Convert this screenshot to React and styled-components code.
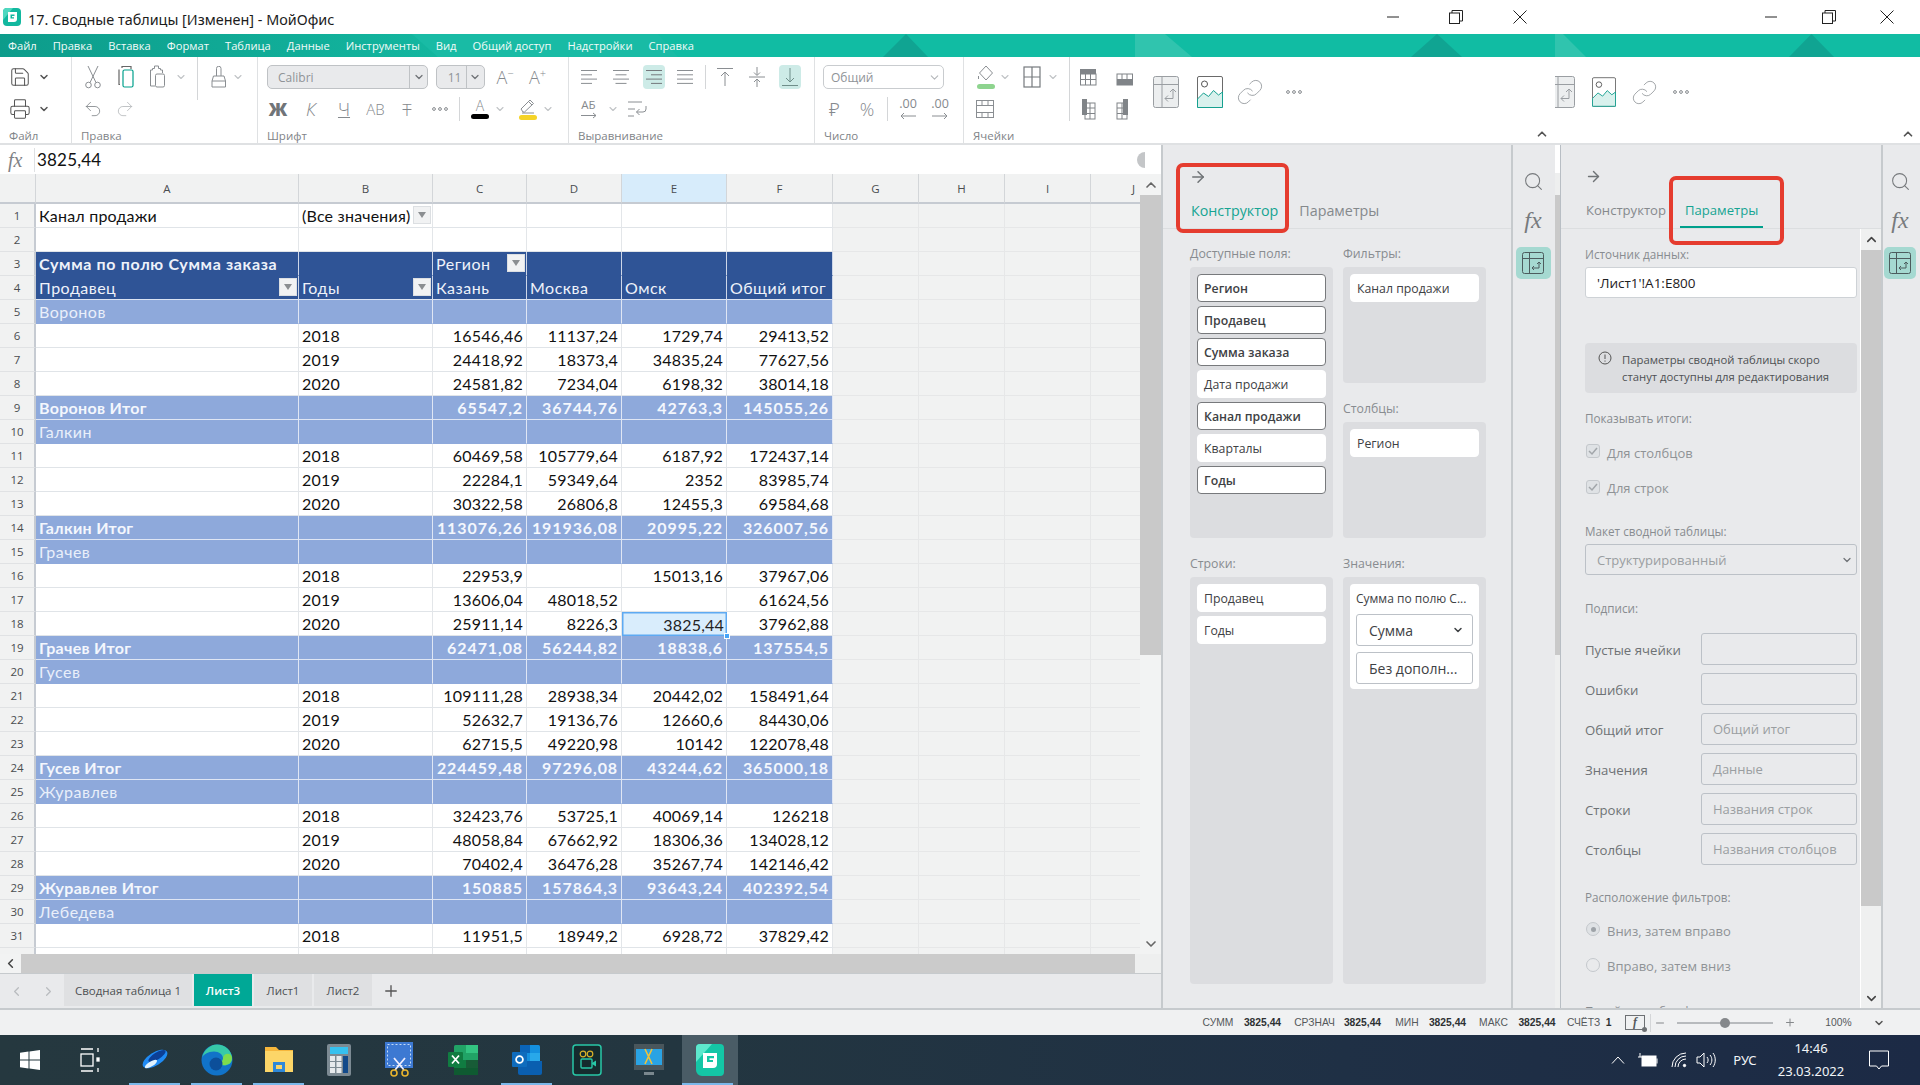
import React from "react";
import styled, { createGlobalStyle } from "styled-components";
import { Save, Printer, ChevronDown, ChevronUp, ChevronLeft, ChevronRight, Undo2, Redo2, ArrowRight, Search, Link, Plus, Minus } from "lucide-react";

const UI = `"Open Sans", "Noto Sans", sans-serif`;
const CELL = `Lato, "Open Sans", sans-serif`;

const GlobalStyle = createGlobalStyle`
  html, body { margin: 0; padding: 0; background: #fff; }
  body { font-family: ${UI}; }
  * { box-sizing: border-box; }
`;

const Page = styled.div`
  width: 1920px;
  height: 1085px;
  display: flex;
  flex-direction: column;
  overflow: hidden;
`;

/* ---------- flow helper: each tool is placed after the previous one ---------- */
const ToolRow = styled.div`
  display: flex;
  align-items: center;
  height: ${(p) => p.$h || 32}px;
`;
const Slot = styled.div`
  flex: none;
  width: ${(p) => p.$w}px;
  margin-left: ${(p) => p.$ml}px;
  display: flex;
  align-items: center;
  justify-content: center;
  white-space: nowrap;
`;
const Tools = ({ from = 0, items, h }) => {
  let x = from;
  return (
    <ToolRow $h={h}>
      {items.map(([c, w, node], i) => {
        const ml = c - w / 2 - x;
        x = c + w / 2;
        return (
          <Slot key={i} $w={w} $ml={ml}>
            {node}
          </Slot>
        );
      })}
    </ToolRow>
  );
};

/* ---------- title + menu ---------- */
const TitleBar = styled.div`
  height: 34px;
  display: flex;
  align-items: center;
  background: #fff;
`;
const TitleLeft = styled.div`
  flex: 1;
  display: flex;
  align-items: center;
  padding-left: 3px;
  gap: 7px;
`;
const TitleText = styled.div`
  font-family: "Noto Sans", sans-serif;
  font-size: 14.4px;
  color: #1c1c1c;
  padding-top: 4px;
`;
const MenuBar = styled.div`
  position: relative;
  height: 23px;
  background: #11bca3;
  display: flex;
  align-items: center;
  padding-left: 8px;
  gap: 16px;
`;
const MenuArt = styled.svg`
  position: absolute;
  left: 0;
  top: 0;
`;
const MenuItem = styled.span`
  position: relative;
  font-size: 11.2px;
  color: #f1fbf9;
  white-space: nowrap;
`;

/* ---------- ribbon ---------- */
const Ribbon = styled.div`
  height: 88px;
  display: flex;
  background: #fff;
  border-bottom: 2px solid #dfe1e3;
`;
const GroupBox = styled.div`
  flex: none;
  width: ${(p) => p.$w}px;
  padding-top: 4px;
  border-right: ${(p) => (p.$plain ? "none" : "1px solid #dfe1e3")};
  display: flex;
  flex-direction: column;
`;
const GroupLabel = styled.div`
  height: 14px;
  margin-top: 4px;
  line-height: 14px;
  padding-left: 9px;
  font-size: 11.5px;
  color: #7f8488;
`;
const WinBlock = styled.div`
  flex: none;
  width: ${(p) => p.$w}px;
  display: flex;
  flex-direction: column;
`;
const CollapseRow = styled.div`
  flex: 1;
  display: flex;
  justify-content: flex-end;
  padding-right: ${(p) => p.$pr}px;
  color: #555;
`;
const VRule = styled.div`
  width: 1px;
  height: ${(p) => p.$h || 24}px;
  background: #d4d6d8;
`;
const ComboBox = styled.div`
  width: 100%;
  height: 24px;
  display: flex;
  align-items: center;
  border: 1px solid ${(p) => (p.$white ? "#c9cccf" : "#bfc2c5")};
  border-radius: 5px;
  background: ${(p) => (p.$white ? "#fff" : "#e9eaec")};
  color: #8f9397;
  font-size: 12px;
  overflow: hidden;
`;
const ComboText = styled.span`
  flex: 1;
  padding-left: ${(p) => p.$pl ?? 10}px;
`;
const ComboArrow = styled.span`
  flex: none;
  width: 18px;
  height: 100%;
  display: flex;
  align-items: center;
  justify-content: center;
  border-left: ${(p) => (p.$line ? "1px solid #bfc2c5" : "none")};
  color: #6f7377;
`;
const Glyph = styled.span`
  font-family: ${UI};
  font-size: ${(p) => p.$s || 16}px;
  font-weight: ${(p) => p.$fw || 300};
  font-style: ${(p) => (p.$it ? "italic" : "normal")};
  color: ${(p) => p.$c || "#85898d"};
  line-height: 1;
  text-decoration: ${(p) => p.$deco || "none"};
`;
const Sup = styled.sup`
  font-size: 11px;
  line-height: 0;
`;
const ColorTool = styled.div`
  display: flex;
  flex-direction: column;
  align-items: center;
  gap: 1px;
`;
const ColorBar = styled.div`
  width: 18px;
  height: 5px;
  border-radius: 3px;
  background: ${(p) => p.$c};
`;
const Toggled = styled.div`
  width: 22px;
  height: 24px;
  border-radius: 4px;
  background: #cdebe7;
  display: flex;
  align-items: center;
  justify-content: center;
`;

const Ico = ({ w = 20, h = 20, c = "#8a8e92", sw = 1, children }) => (
  <svg width={w} height={h} viewBox={`0 0 ${w} ${h}`} fill="none" stroke={c} strokeWidth={sw}>
    {children}
  </svg>
);
const Chev = ({ light }) => <ChevronDown size={12} strokeWidth={light ? 2.2 : 3} color={light ? "#c0c3c6" : "#555"} />;

const AlignIco = ({ kind }) => {
  const rows = kind === "justify" ? [16, 16, 16, 16] : [16, 11, 16, 11];
  return (
    <Ico w={16} h={16} c={kind === "right" ? "#74787c" : "#8a8e92"}>
      {rows.map((l, i) => {
        const x = kind === "center" ? (16 - l) / 2 : kind === "right" ? 16 - l : 0;
        return <path key={i} d={`M${x} ${1.5 + i * 4.3}h${l}`} />;
      })}
    </Ico>
  );
};
const ScissorsIco = () => (
  <Ico w={16} h={24}>
    <circle cx="3.5" cy="20" r="2.8" />
    <circle cx="12.5" cy="20" r="2.8" />
    <path d="M5 17.6 13 1M11 17.6 3 1" />
  </Ico>
);
const CopyIco = () => (
  <Ico w={18} h={24} c="#00a08c" sw={1.2}>
    <path d="M4 3V1.5h9V4" stroke="#666" />
    <path d="M1 4.5v15h1" stroke="#666" />
    <rect x="5" y="5" width="10" height="17" rx="1.5" />
  </Ico>
);
const PasteIco = () => (
  <Ico w={18} h={24}>
    <path d="M1.5 5h2v-1.5h2V1h4v2.5h2V5h2v3M6 21H1.5V5" />
    <rect x="6.5" y="9" width="9" height="13" rx="1.5" />
  </Ico>
);
const BrushIco = () => (
  <Ico w={16} h={22}>
    <path d="M5.5 10V2.5a2 2 0 0 1 4.5 0V10M2.5 10h10.5l1.5 5H1l1.500-5zM1 15v6h13.500v-6" />
  </Ico>
);
const VAlignIco = ({ kind, c }) => (
  <Ico w={18} h={20} c={c}>
    {kind === "top" && <path d="M1 1.500h16M9 19V5M5 9l4-4 4 4" />}
    {kind === "mid" && <path d="M1 10h16M9 0v8M6 5.500l3 3 3-3M9 20v-8M6 15l3-3 3 3" />}
    {kind === "bottom" && <path d="M1 18.500h16M9 1v14M5 11l4 4 4-4" />}
  </Ico>
);
const LetterArrow = () => (
  <ColorTool>
    <Glyph $s={11.5} $fw={400}>АБ</Glyph>
    <Ico w={16} h={7}><path d="M0 3.500h15M12 1l3 2.500-3 2.500" /></Ico>
  </ColorTool>
);
const WrapIco = () => (
  <Ico w={20} h={20}>
    <path d="M1 2h14M1 9h7M1 16h6M19 6v3a3 3 0 0 1-3 3H9.500M12.500 9l-3 3 3 3" transform="translate(0 1)" />
  </Ico>
);
const DecIco = ({ dir }) => (
  <ColorTool>
    <Glyph $s={12.500} $fw={400}>.00</Glyph>
    <Ico w={16} h={8}>
      {dir === "left" ? <path d="M16 4H1M4 1 1 4l3 3" /> : <path d="M0 4h15M12 1l3 3-3 3" />}
    </Ico>
  </ColorTool>
);
const FillIco = () => (
  <ColorTool>
    <Ico w={20} h={18}>
      <path d="M10 1l6.500 7-6.500 7-6.500-7zM2.500 11v3" />
    </Ico>
    <ColorBar $c="#8ed48f" />
  </ColorTool>
);
const PencilIco = () => (
  <ColorTool>
    <Ico w={18} h={15}>
      <path d="M4 13 2 10l9-9 3.500 3.500-9 8.500zM3 14h12M9.500 2.500l3.500 3.500" />
    </Ico>
    <ColorBar $c="#f5d327" />
  </ColorTool>
);
const BorderIco = () => (
  <Ico w={18} h={22} c="#767a7e" sw={1.2}>
    <rect x="1" y="1" width="16" height="20" />
    <path d="M9 1v20M1 11h16" />
  </Ico>
);
// fill: rectangle in dark on one side of a small table
const TableIco = ({ side }) => {
  const dark = "#808488";
  if (side === "top" || side === "bottom") {
    return (
      <Ico w={20} h={18} c="#808488">
        <rect x={side === "top" ? 0.500 : 4} y="6" width="15.500" height="11" />
        <path d={`M${side === "top" ? 0.5 : 4} 11.500h15.500M${side === "top" ? 5.500 : 9} 6v11M${side === "top" ? 10.500 : 14} 6v11`} />
        <rect x={side === "top" ? 0 : 4} y={side === "top" ? 1 : 12} width="16" height="5" fill={dark} stroke="none" />
      </Ico>
    );
  }
  return (
    <Ico w={18} h={22} c="#808488">
      <rect x="4" y="5" width="10" height="16" />
      <path d="M9 5v16M4 10h10M4 15.500h10" />
      <rect x={side === "left" ? 1 : 10} y="1" width="5" height="16" fill={dark} stroke="none" />
    </Ico>
  );
};
const RowsIco = () => (
  <Ico w={18} h={18}>
    <rect x="0.500" y="0.500" width="17" height="17" />
    <path d="M.500 5.500h17M.500 12.500h17M6 .500v5M12 .500v5M6 12.500v5M12 12.500v5" />
  </Ico>
);
const PivotBig = ({ cut }) => (
  <svg width={cut ? 20 : 26} height="32" viewBox={cut ? "6 0 20 32" : "0 0 26 32"} fill="#eceeef" stroke="#9a9ea2">
    <rect x=".5" y=".5" width="25" height="31" rx="2" />
    <path d="M.5 8.500h25M9 .500v31M12 22.500h8V13M17 16l3-3 3 3M15 19.500l-3 3 3 3" fill="none" />
  </svg>
);
const ImageBig = ({ small }) => (
  <svg width={small ? 24 : 26} height="32" viewBox="0 0 26 32" fill="none" stroke="#15a08f">
    <path d="M2 .500h22a1.500 1.500 0 0 1 1.500 1.500v28a1.500 1.500 0 0 1-1.500 1.500H2A1.500 1.500 0 0 1 .500 30V2A1.500 1.500 0 0 1 2 .500z" stroke="#444" strokeWidth=".8" />
    <path d="M.5 31.500h25V16l-4 3-5-4.500-5 6-5-3.500-6 6z" fill="#d9f1ed" stroke="#15a08f" />
    <circle cx="7.500" cy="8" r="3" stroke="#555" />
  </svg>
);
const Dots = () => (
  <svg width="16" height="4" viewBox="0 0 16 4" fill="none" stroke="#85898d">
    <circle cx="2" cy="2" r="1.400" />
    <circle cx="8" cy="2" r="1.400" />
    <circle cx="14" cy="2" r="1.400" />
  </svg>
);

const RibbonGroup = ({ w, label, rows, plain, from }) => (
  <GroupBox $w={w} $plain={plain}>
    {rows.map((items, i) => (
      <Tools key={i} from={from} items={items} />
    ))}
    <GroupLabel>{label}</GroupLabel>
  </GroupBox>
);

/* ---------- sheet ---------- */
const Work = styled.div`
  height: 863px;
  display: flex;
  background: #e9eaec;
`;
const SheetArea = styled.div`
  flex: none;
  width: 1163px;
  display: flex;
  flex-direction: column;
  border-right: 2px solid #c6cacd;
`;
const FormulaBar = styled.div`
  flex: none;
  height: 29px;
  background: #fff;
  display: flex;
  align-items: center;
`;
const FxMark = styled.div`
  width: 35px;
  padding-left: 8px;
  font-family: "Liberation Serif", serif;
  font-style: italic;
  font-size: 20px;
  color: #7f8387;
  border-right: 1px solid #dfe1e3;
  line-height: 24px;
`;
const FormulaValue = styled.div`
  flex: 1;
  padding-left: 2px;
  font-family: ${CELL};
  font-size: 17px;
  letter-spacing: 0.2px;
  color: #111;
`;
const PanelHandle = styled.div`
  width: 8px;
  height: 16px;
  margin-right: 16px;
  border-radius: 8px 0 0 8px;
  background: #c4c6c8;
`;
const GridRow = styled.div`
  flex: none;
  height: 780px;
  display: flex;
`;
const SheetGrid = styled.div`
  flex: none;
  width: 1140px;
  height: 780px;
  overflow: hidden;
  display: grid;
  grid-template-columns: 36px 263px 134px 94px 95px 105px 106px 86px 86px 86px 86px;
  grid-auto-rows: 24px;
  grid-template-rows: 30px;
  font-family: ${CELL};
  font-size: 16px;
`;
const ColHead = styled.div`
  display: flex;
  align-items: center;
  justify-content: center;
  font-family: ${UI};
  font-size: 11.500px;
  color: #4a4d50;
  background: ${(p) => (p.$active ? "#d7ecfb" : "#f1f2f2")};
  border-right: 1px solid #d3d6d9;
  border-bottom: 2px solid #c6cbd2;
`;
const RowHead = styled.div`
  display: flex;
  align-items: center;
  justify-content: center;
  font-family: ${UI};
  font-size: 11.500px;
  color: #4a4d50;
  background: #f1f2f2;
  border-right: 2px solid #c6cbd2;
  border-bottom: 1px solid #e0e2e4;
`;
const cellSkin = {
  plain: "background:#fff;color:#111;letter-spacing:.2px;border-right:1px solid #e3e6e9;border-bottom:1px solid #e0e4e8;",
  empty: "background:#f1f2f2;border-right:1px solid #e6e7e8;border-bottom:1px solid #e6e7e8;",
  head: "background:#2f5496;color:#eef2fa;letter-spacing:.5px;border-right:1px solid #cdd6e8;border-bottom:1px solid #2f5496;",
  headEnd: "background:#2f5496;color:#eef2fa;letter-spacing:.5px;border-right:1px solid #cdd6e8;border-bottom:1px solid #dbe3f2;",
  band: "background:#8ea9db;color:#e9effa;letter-spacing:.5px;border-right:1px solid #dfe6f4;border-bottom:1px solid #8ea9db;",
  total: "background:#8ea9db;color:#f4f7fd;font-weight:700;letter-spacing:.3px;border-right:1px solid #dfe6f4;border-bottom:1px solid #dfe6f4;",
  selected: "background:#d9edfc;color:#222;letter-spacing:.2px;box-shadow:inset 0 0 0 1.500px #5eaaf2;",
};
const Cell = styled.div`
  position: relative;
  display: flex;
  align-items: center;
  justify-content: ${(p) => (p.$num ? "flex-end" : "flex-start")};
  padding: 0 3px;
  white-space: nowrap;
  ${(p) => cellSkin[p.$skin]}
  ${(p) => (p.$bold ? "font-weight:700;letter-spacing:.65px;" : "")}
  ${(p) => (p.$skin === "total" && p.$num ? "letter-spacing:.9px;" : "")}
`;
const FilterBtn = styled.div`
  position: absolute;
  right: 1px;
  top: 2px;
  width: 18px;
  height: 18px;
  display: flex;
  align-items: center;
  justify-content: center;
  background: #f1f2f3;
  border: 1px solid #dcdfe2;
  &::after {
    content: "";
    border-left: 4px solid transparent;
    border-right: 4px solid transparent;
    border-top: 6px solid #8b8e91;
  }
`;
const SelHandle = styled.div`
  position: absolute;
  right: -3px;
  bottom: -3px;
  width: 6px;
  height: 6px;
  background: #49a5f7;
  border: 1px solid #fff;
  z-index: 2;
`;
const VScroll = styled.div`
  flex: none;
  width: 21px;
  display: flex;
  flex-direction: column;
  background: #f2f3f3;
`;
const ScrollBtn = styled.div`
  flex: none;
  height: ${(p) => p.$h}px;
  display: flex;
  align-items: center;
  justify-content: center;
  color: #666;
`;
const ScrollThumb = styled.div`
  flex: none;
  height: ${(p) => p.$h}px;
  background: #c9c9c9;
`;
const ScrollRest = styled.div`
  flex: 1;
`;
const HScroll = styled.div`
  flex: none;
  height: 20px;
  display: flex;
  background: #eeefef;
  border-bottom: 1px solid #c6cacd;
`;
const HBtn = styled.div`
  flex: none;
  width: 21px;
  display: flex;
  align-items: center;
  justify-content: center;
  color: #444;
  background: #f2f3f3;
`;
const HThumb = styled.div`
  flex: none;
  width: 1114px;
  background: #cbcbcb;
`;
const SheetTabs = styled.div`
  flex: 1;
  display: flex;
  align-items: stretch;
  background: #e9eaec;
`;
const SheetNav = styled.div`
  width: 32px;
  display: flex;
  align-items: center;
  justify-content: center;
  color: #b9bcbf;
`;
const SheetTab = styled.div`
  flex: none;
  width: ${(p) => p.$w}px;
  margin-right: 2px;
  height: 32px;
  display: flex;
  align-items: center;
  justify-content: center;
  font-size: 11.500px;
  background: ${(p) => (p.$active ? "#00a896" : "#dfe0e2")};
  color: ${(p) => (p.$active ? "#fff" : "#4d5053")};
  font-weight: ${(p) => (p.$active ? 600 : 400)};
`;
const AddSheet = styled.div`
  margin-left: 8px;
  display: flex;
  align-items: center;
  color: #555;
`;

/* ---------- side panels ---------- */
const Panel = styled.div`
  position: relative;
  flex: none;
  width: ${(p) => p.$w}px;
  height: 100%;
  display: flex;
  flex-direction: column;
  overflow: hidden;
  border-left: ${(p) => (p.$edge ? "1px solid #b8bec4" : "none")};
`;
const PanelHead = styled.div`
  flex: none;
  height: 84px;
  display: flex;
  flex-direction: column;
  padding-left: ${(p) => p.$pl}px;
  border-bottom: 1px solid #dcdee0;
  color: #6f7376;
`;
const BackArrow = styled.div`
  height: 52px;
  padding: 23px 0 0 ${(p) => p.$pl}px;
`;
const TabRow = styled.div`
  flex: 1;
  display: flex;
  gap: ${(p) => p.$gap}px;
`;
const TabBtn = styled.div`
  padding: 5px 5px 0;
  height: 32px;
  font-size: ${(p) => p.$s}px;
  color: ${(p) => (p.$active ? "#15a492" : "#85898c")};
  border-bottom: ${(p) => (p.$line ? "2.500px solid #00a08c" : "none")};
`;
const RedFrame = styled.div`
  position: absolute;
  left: ${(p) => p.$l}px;
  top: ${(p) => p.$t}px;
  width: ${(p) => p.$w}px;
  height: ${(p) => p.$h}px;
  border: 4px solid #e53c2f;
  border-radius: 7px;
`;
const PivotBody = styled.div`
  flex: 1;
  display: grid;
  grid-template-columns: 143px 143px;
  column-gap: 10px;
  padding: 16px 0 0 27px;
`;
const PivotCol = styled.div`
  display: flex;
  flex-direction: column;
`;
const FieldLabel = styled.div`
  height: 18px;
  line-height: 18px;
  margin-top: ${(p) => p.$mt || 0}px;
  font-size: ${(p) => p.$s || 11.7}px;
  color: #888c90;
  white-space: nowrap;
`;
const FieldBox = styled.div`
  margin-top: 4px;
  height: ${(p) => p.$h}px;
  padding: 7px;
  display: flex;
  flex-direction: column;
  gap: 4px;
  background: #dcdde0;
  border-radius: 4px;
`;
const FieldItem = styled.div`
  flex: none;
  height: 28px;
  display: flex;
  align-items: center;
  padding-left: 6px;
  background: #fff;
  border-radius: 4px;
  font-size: 12.300px;
  color: #3e4144;
  white-space: nowrap;
  font-weight: ${(p) => (p.$used ? 600 : 400)};
  border: 1px solid ${(p) => (p.$used ? "#77797c" : "#fff")};
`;
const ValueCard = styled.div`
  flex: none;
  height: 105px;
  padding: 3px 6px 0;
  background: #fff;
  border-radius: 4px;
  font-size: 12px;
  color: #3e4144;
  white-space: nowrap;
`;
const ValueTitle = styled.div`
  height: 27px;
  line-height: 24px;
`;
const ValueBtn = styled.div`
  height: 32px;
  margin-bottom: 6px;
  display: flex;
  align-items: center;
  justify-content: space-between;
  padding: 0 8px 0 12px;
  border: 1px solid #bcc1c7;
  border-radius: 3px;
  font-size: 14px;
  color: #3e4144;
`;
const Strip = styled.div`
  flex: none;
  width: ${(p) => p.$w}px;
  height: 100%;
  padding: 26px ${(p) => p.$pr}px 0 0;
  display: flex;
  flex-direction: column;
  align-items: center;
  border-left: 2px solid #c6cacd;
  color: #76797c;
`;
const StripFx = styled.div`
  margin-top: 13px;
  height: 30px;
  font-family: "Liberation Serif", serif;
  font-style: italic;
  font-size: 24px;
  line-height: 30px;
  color: #777a7d;
`;
const StripActive = styled.div`
  margin-top: 12px;
  flex: none;
  width: ${(p) => p.$w}px;
  height: 32px;
  display: flex;
  align-items: center;
  justify-content: center;
  border-radius: 5px;
  background: #a5d9d1;
`;
const Sliver = styled.div`
  flex: none;
  width: 5px;
  display: flex;
  flex-direction: column;
  background: #eeefef;
`;
const SliverPart = styled.div`
  flex: none;
  height: ${(p) => p.$h}px;
  background: ${(p) => p.$c};
`;
const PanelMain = styled.div`
  flex: 1;
  display: flex;
  min-height: 0;
`;
const ParamsBody = styled.div`
  flex: none;
  width: 300px;
  padding: 16px 3px 0 24px;
  overflow: hidden;
  border-right: 1px solid #fff;
  color: #7e8285;
`;
const TextInput = styled.div`
  height: ${(p) => p.$h || 31}px;
  margin-top: ${(p) => p.$mt || 0}px;
  padding-left: 11px;
  display: flex;
  align-items: center;
  border: 1px solid ${(p) => (p.$white ? "#ced2d6" : "#bcc1c7")};
  border-radius: 3px;
  background: ${(p) => (p.$white ? "#fff" : "transparent")};
  color: ${(p) => p.$c || "#9a9ea1"};
  font-size: ${(p) => p.$s || 13}px;
  white-space: nowrap;
`;
const InfoBox = styled.div`
  margin-top: 45px;
  height: 50px;
  display: flex;
  gap: 10px;
  padding: 8px 0 0 13px;
  background: #dcdde0;
  border-radius: 4px;
  color: #4e5154;
  font-size: 11.300px;
  line-height: 17px;
`;
const CheckRow = styled.div`
  height: 35.500px;
  margin-top: ${(p) => p.$mt || 0}px;
  display: flex;
  align-items: center;
  gap: 7px;
  padding-left: 1px;
  font-size: 13px;
  color: #8f9396;
`;
const CheckBox = styled.div`
  flex: none;
  width: 14px;
  height: 14px;
  margin-top: -3px;
  display: flex;
  align-items: center;
  justify-content: center;
  border: 1px solid #c4c8cc;
  border-radius: 3px;
  background: #dfe2e5;
`;
const RadioDot = styled.div`
  flex: none;
  width: 14px;
  height: 14px;
  margin-top: -3px;
  display: flex;
  align-items: center;
  justify-content: center;
  border: 1px solid #c4c8cc;
  border-radius: 50%;
  background: ${(p) => (p.$on ? "#dfe2e5" : "transparent")};
  &::after {
    content: "";
    width: 5px;
    height: 5px;
    border-radius: 50%;
    background: ${(p) => (p.$on ? "#9ea3a8" : "transparent")};
  }
`;
const LabelGrid = styled.div`
  margin-top: 16px;
  display: grid;
  grid-template-columns: 116px 156px;
  grid-auto-rows: 32px;
  row-gap: 8px;
  align-items: center;
`;
const RowCaption = styled.div`
  font-size: 13.200px;
  color: #6e7275;
  padding-top: 2px;
`;
const ParamScroll = styled.div`
  flex: none;
  width: 20px;
  display: flex;
  flex-direction: column;
  background: #eff0f0;
`;

/* ---------- status and task bars ---------- */
const StatusBar = styled.div`
  flex: none;
  height: 27px;
  display: flex;
  align-items: center;
  background: #f0f1f2;
  border-top: 2px solid #c6cacd;
  font-family: "Liberation Sans", sans-serif;
  font-size: 10.300px;
  color: #54585b;
`;
const StatValue = styled.b`
  color: #2e3134;
  font-size: 10.300px;
`;
const FxBox = styled.div`
  position: relative;
  width: 20px;
  height: 15px;
  display: flex;
  align-items: center;
  justify-content: center;
  border: 1px solid #6d7073;
  font-family: "Liberation Serif", serif;
  font-style: italic;
  font-weight: 700;
  font-size: 12px;
  &::after {
    content: "";
    position: absolute;
    right: -3px;
    bottom: -3px;
    width: 5px;
    height: 5px;
    border-radius: 50%;
    background: #6d7073;
  }
`;
const ZoomTrack = styled.div`
  position: relative;
  width: 96px;
  height: 2px;
  background: #b7babd;
`;
const ZoomThumb = styled.div`
  position: absolute;
  left: 43px;
  top: -4px;
  width: 10px;
  height: 10px;
  border-radius: 50%;
  background: #85888b;
`;
const TaskBar = styled.div`
  flex: none;
  height: 50px;
  display: flex;
  background: linear-gradient(90deg, #25383f 0%, #233640 35%, #1f3045 70%, #1c2a45 100%);
  color: #f1f4f7;
`;
const TaskLeft = styled.div`
  flex: 1;
`;
const TaskItem = styled.div`
  position: relative;
  width: 100%;
  height: 50px;
  display: flex;
  align-items: center;
  justify-content: center;
  background: ${(p) => (p.$active ? "#4a5c66" : "transparent")};
  &::after {
    content: "";
    position: absolute;
    left: 0;
    right: ${(p) => (p.$active ? 5 : 0)}px;
    bottom: 0;
    height: ${(p) => (p.$running ? 2.500 : 0)}px;
    background: #7ab8ea;
  }
`;
const TaskClock = styled.div`
  font-family: "Noto Sans", sans-serif;
  font-size: 13px;
  line-height: 23px;
  text-align: center;
`;
const TrayText = styled.span`
  font-family: "Noto Sans", sans-serif;
  font-size: 13px;
`;

/* ---------- logos ---------- */
const AppLogo = ({ s = 18 }) => (
  <svg width={s} height={s} viewBox="0 0 18 18">
    <rect width="18" height="18" rx="4" fill="#12b89f" />
    <path d="M0 4a4 4 0 0 1 4-4h6L0 12z" fill="#4fd8c0" />
    <path d="M5 4h9v7a3 3 0 0 1-3 3H5z" fill="#fff" />
    <path d="M7.500 6.500h4v1.500h-2.500v1.200h2v1.300H7.500z" fill="#12b89f" />
  </svg>
);
const WinLogo = () => (
  <svg width="20" height="20" viewBox="0 0 20 20" fill="#fff">
    <path d="M0 2.800 8.500 1.500v8H0zM9.500 1.400 20 0v9.500H9.500zM0 10.500h8.500v8L0 17.200zM9.500 10.500H20V20L9.500 18.600z" />
  </svg>
);
const TaskView = () => (
  <svg width="20" height="26" viewBox="0 0 20 26" fill="none" stroke="#fff" strokeWidth="1.300">
    <path d="M1 2h12M1 24h12" />
    <rect x="1" y="7" width="12" height="12" />
    <path d="M18 1v4M18 21v4" />
    <rect x="17" y="11" width="2" height="3" fill="#fff" />
  </svg>
);
const CortanaBlob = () => (
  <svg width="30" height="26" viewBox="0 0 30 26">
    <ellipse cx="15" cy="12" rx="14" ry="6.500" transform="rotate(-32 15 12)" fill="#1f8bf5" />
    <ellipse cx="17" cy="9" rx="10" ry="3.500" transform="rotate(-32 17 9)" fill="#0c3f96" />
    <ellipse cx="11" cy="17" rx="7" ry="2.500" transform="rotate(-32 11 17)" fill="#dff2ff" />
  </svg>
);
const EdgeLogo = () => (
  <svg width="32" height="32" viewBox="0 0 32 32">
    <circle cx="16" cy="16" r="15.500" fill="#1173c9" />
    <path d="M1 14C3 5 10 .500 16 .500c8 0 15 6 15 14 0 5-4 7-8 7-3 0-5-1-6-2 3 0 5-2 5-5 0-4-4-7-9-7-6 0-11 3-12 6.500z" fill="#37c9a8" />
    <path d="M31 14c0 5-4 7-8 7-3 0-5-1-6-2 3 0 5-2 5-5 1-6 9-5 9 0z" fill="#7ddb4d" />
    <circle cx="15" cy="20" r="6.500" fill="#0c4f9a" />
  </svg>
);
const FolderLogo = () => (
  <svg width="30" height="28" viewBox="0 0 30 28">
    <path d="M1 1h11l3 3h14v22H1z" fill="#f6b73c" />
    <path d="M1 5h28v21H1z" fill="#fcd668" />
    <rect x="9" y="16" width="12" height="10" fill="#2e88d8" />
    <rect x="12" y="19" width="6" height="4" fill="#fcd668" />
  </svg>
);
const CalcLogo = () => (
  <svg width="24" height="32" viewBox="0 0 24 32">
    <rect width="24" height="32" rx="2" fill="#7c8a93" />
    <rect x="3" y="3" width="18" height="7" fill="#36c1ef" />
    {[0, 1, 2].flatMap((r) =>
      [0, 1].map((c) => <rect key={`${r}${c}`} x={3 + c * 6.500} y={12 + r * 6} width="5" height="5" fill="#e6eaed" />)
    )}
    <rect x="16" y="12" width="5" height="17" fill="#124a8a" />
  </svg>
);
const SnipLogo = () => (
  <svg width="30" height="36" viewBox="0 0 30 36">
    <rect width="28" height="26" fill="#3d79d2" />
    <rect x="2.500" y="2.500" width="23" height="21" fill="none" stroke="#c5dcf6" strokeDasharray="2 2" />
    <path d="M10 28 20 16M19 28 9 16" stroke="#eef" strokeWidth="1.800" />
    <circle cx="9" cy="31" r="3" fill="none" stroke="#e9b52e" strokeWidth="1.600" />
    <circle cx="20" cy="31" r="3" fill="none" stroke="#e9b52e" strokeWidth="1.600" />
  </svg>
);
const ExcelLogo = () => (
  <svg width="30" height="30" viewBox="0 0 30 30">
    <rect x="6" y="0" width="24" height="30" rx="1.500" fill="#21a366" />
    <rect x="18" y="0" width="12" height="8" fill="#33c481" />
    <rect x="6" y="15" width="12" height="8" fill="#107c41" />
    <rect x="18" y="15" width="12" height="8" fill="#185c37" />
    <rect x="6" y="23" width="24" height="7" fill="#0f5a31" />
    <rect x="0" y="7" width="15" height="15" rx="1" fill="#107c41" />
    <path d="M4 10.500 11 18.500M11 10.500 4 18.500" stroke="#fff" strokeWidth="1.800" />
  </svg>
);
const OutlookLogo = () => (
  <svg width="30" height="30" viewBox="0 0 30 30">
    <rect x="8" y="0" width="20" height="24" rx="1.500" fill="#1490df" />
    <rect x="8" y="0" width="10" height="8" fill="#0a64b8" />
    <rect x="18" y="8" width="10" height="8" fill="#28a8ea" />
    <path d="M6 16h24v12a2 2 0 0 1-2 2H8a2 2 0 0 1-2-2z" fill="#0a5fb0" />
    <rect x="0" y="7" width="15" height="15" rx="1" fill="#0f6cbd" />
    <circle cx="7.500" cy="14.500" r="3.400" fill="none" stroke="#fff" strokeWidth="1.800" />
  </svg>
);
const VideoLogo = () => (
  <svg width="30" height="32" viewBox="0 0 30 32">
    <rect x="1" y="1" width="28" height="30" rx="3" fill="#152b2e" stroke="#28c7a7" strokeWidth="1.500" />
    <circle cx="11" cy="10" r="2.800" fill="none" stroke="#d9b12a" strokeWidth="1.200" />
    <circle cx="18" cy="10" r="2.800" fill="none" stroke="#d9b12a" strokeWidth="1.200" />
    <rect x="9" y="15" width="11" height="9" rx="1" fill="none" stroke="#28c7a7" strokeWidth="1.400" />
    <path d="M20 19l4-2.500v6L20 20z" fill="#28c7a7" />
  </svg>
);
const ScreenLogo = () => (
  <svg width="30" height="32" viewBox="0 0 30 32">
    <rect width="30" height="26" fill="#49565c" />
    <rect x="2" y="5" width="26" height="16" fill="#2aa3e4" />
    <path d="M11 20 18 5M18 20 11 5" stroke="#f0c23a" strokeWidth="1.600" />
    <rect x="10" y="28" width="10" height="3" fill="#7a878e" />
  </svg>
);
const MyOfficeLogo = () => (
  <svg width="28" height="32" viewBox="0 0 28 32">
    <path d="M4 0h20a4 4 0 0 1 4 4v24a4 4 0 0 1-4 4H6a6 6 0 0 1-6-6V4a4 4 0 0 1 4-4z" fill="#14c6a6" />
    <path d="M0 4a4 4 0 0 1 4-4h12L0 18z" fill="#5ee8cd" />
    <path d="M7 9h14v11a4 4 0 0 1-4 4H7z" fill="#fff" />
    <path d="M11 12h7v2.200h-4.500V16h3.500v2h-6z" fill="#14c6a6" />
  </svg>
);

const PivotSmall = () => (
  <svg width="22" height="22" viewBox="0 0 22 22" fill="none" stroke="#4d5c5e">
    <rect x=".5" y=".5" width="21" height="21" rx="2" />
    <path d="M.500 6.500h21M7.500 .500v21M10 16h7v-6M15 12l2-2 2 2M12 14l-2 2 2 2" />
  </svg>
);

/* ---------- data ---------- */
const rows = [
  { n: 1, c: ["Канал продажи", "(Все значения)"], skin: "plain", filters: { 1: 1 } },
  { n: 2, c: [], skin: "plain" },
  { n: 3, c: ["Сумма по полю Сумма заказа", "", "Регион"], skin: "head", boldA: true, filters: { 2: 1 } },
  { n: 4, c: ["Продавец", "Годы", "Казань", "Москва", "Омск", "Общий итог"], skin: "headEnd", filters: { 0: 1, 1: 1 } },
  { n: 5, c: ["Воронов"], skin: "band" },
  { n: 6, c: ["", "2018", "16546,46", "11137,24", "1729,74", "29413,52"] },
  { n: 7, c: ["", "2019", "24418,92", "18373,4", "34835,24", "77627,56"] },
  { n: 8, c: ["", "2020", "24581,82", "7234,04", "6198,32", "38014,18"] },
  { n: 9, c: ["Воронов Итог", "", "65547,2", "36744,76", "42763,3", "145055,26"], skin: "total" },
  { n: 10, c: ["Галкин"], skin: "band" },
  { n: 11, c: ["", "2018", "60469,58", "105779,64", "6187,92", "172437,14"] },
  { n: 12, c: ["", "2019", "22284,1", "59349,64", "2352", "83985,74"] },
  { n: 13, c: ["", "2020", "30322,58", "26806,8", "12455,3", "69584,68"] },
  { n: 14, c: ["Галкин Итог", "", "113076,26", "191936,08", "20995,22", "326007,56"], skin: "total" },
  { n: 15, c: ["Грачев"], skin: "band" },
  { n: 16, c: ["", "2018", "22953,9", "", "15013,16", "37967,06"] },
  { n: 17, c: ["", "2019", "13606,04", "48018,52", "", "61624,56"] },
  { n: 18, c: ["", "2020", "25911,14", "8226,3", "3825,44", "37962,88"], sel: 4 },
  { n: 19, c: ["Грачев Итог", "", "62471,08", "56244,82", "18838,6", "137554,5"], skin: "total" },
  { n: 20, c: ["Гусев"], skin: "band" },
  { n: 21, c: ["", "2018", "109111,28", "28938,34", "20442,02", "158491,64"] },
  { n: 22, c: ["", "2019", "52632,7", "19136,76", "12660,6", "84430,06"] },
  { n: 23, c: ["", "2020", "62715,5", "49220,98", "10142", "122078,48"] },
  { n: 24, c: ["Гусев Итог", "", "224459,48", "97296,08", "43244,62", "365000,18"], skin: "total" },
  { n: 25, c: ["Журавлев"], skin: "band" },
  { n: 26, c: ["", "2018", "32423,76", "53725,1", "40069,14", "126218"] },
  { n: 27, c: ["", "2019", "48058,84", "67662,92", "18306,36", "134028,12"] },
  { n: 28, c: ["", "2020", "70402,4", "36476,28", "35267,74", "142146,42"] },
  { n: 29, c: ["Журавлев Итог", "", "150885", "157864,3", "93643,24", "402392,54"], skin: "total" },
  { n: 30, c: ["Лебедева"], skin: "band" },
  { n: 31, c: ["", "2018", "11951,5", "18949,2", "6928,72", "37829,42"] },
  { n: 32, c: [], hideNum: true },
];
const colNames = ["A", "B", "C", "D", "E", "F", "G", "H", "I", "J"];
const menu = ["Файл", "Правка", "Вставка", "Формат", "Таблица", "Данные", "Инструменты", "Вид", "Общий доступ", "Надстройки", "Справка"];
const available = [
  ["Регион", 1],
  ["Продавец", 1],
  ["Сумма заказа", 1],
  ["Дата продажи", 0],
  ["Канал продажи", 1],
  ["Кварталы", 0],
  ["Годы", 1],
];
const captions = [
  ["Пустые ячейки", ""],
  ["Ошибки", ""],
  ["Общий итог", "Общий итог"],
  ["Значения", "Данные"],
  ["Строки", "Названия строк"],
  ["Столбцы", "Названия столбцов"],
];
const isNumCol = (n, i) => i >= 2 && n > 4;

const WinMin = () => (
  <Ico w={14} h={14} c="#222"><path d="M1 7h12" /></Ico>
);
const WinRestore = () => (
  <Ico w={14} h={14} c="#222"><rect x=".5" y="3" width="10" height="10.500" /><path d="M3 3V.500h10.500v10.500H10.500" /></Ico>
);
const WinClose = () => (
  <Ico w={14} h={14} c="#222"><path d="M.5.5l13 13M13.500.5l-13 13" /></Ico>
);

const Stat = ({ children }) => <span>{children}</span>;

export default function App() {
  return (
    <Page>
      <GlobalStyle />
      <TitleBar>
        <TitleLeft>
          <AppLogo />
          <TitleText>17. Сводные таблицы [Изменен] - МойОфис</TitleText>
        </TitleLeft>
        <Tools
          from={1370}
          h={34}
          items={[
            [1393, 16, <WinMin />],
            [1455.5, 16, <WinRestore />],
            [1520, 16, <WinClose />],
            [1771, 16, <WinMin />],
            [1828.5, 16, <WinRestore />],
            [1887, 16, <WinClose />],
            [1920, 0, null],
          ]}
        />
      </TitleBar>

      <MenuBar>
        <MenuArt width="1920" height="23" viewBox="0 0 1920 23">
          <defs>
            <linearGradient id="menuLeft" x1="0" x2="1" y1="0" y2="0">
              <stop offset="0" stopColor="#0d9c8b" />
              <stop offset="1" stopColor="#13b69f" />
            </linearGradient>
          </defs>
          <path d="M0 0h412l26 23H0z" fill="url(#menuLeft)" />
          <path d="M438 23 412 0h246l20 23z" fill="#19bba5" />
          <path d="M883 23 906 0l22 23z" fill="#10a492" />
          <path d="M1411 23l26-23 25 23z" fill="#10a492" />
          <path d="M1789 23 1811.500 0 1834 23z" fill="#10a492" />
          <path d="M1135 0h30l27 23h-57z" fill="#30c4ae" />
          <path d="M1555 0h8l23 23h-31z" fill="#30c4ae" />
        </MenuArt>
        {menu.map((m) => (
          <MenuItem key={m}>{m}</MenuItem>
        ))}
      </MenuBar>

      <Ribbon>
        <RibbonGroup
          w={72}
          label="Файл"
          from={0}
          rows={[
            [[20, 22, <Save size={22} strokeWidth={1.100} color="#555" />], [44, 12, <Chev />]],
            [[20, 22, <Printer size={22} strokeWidth={1.100} color="#555" />], [44, 12, <Chev />]],
          ]}
        />
        <RibbonGroup
          w={186}
          label="Правка"
          from={72}
          rows={[
            [
              [93, 22, <ScissorsIco />],
              [126.5, 22, <CopyIco />],
              [158, 22, <PasteIco />],
              [181, 12, <Chev light />],
              [197.5, 1, <VRule $h={46} />],
              [219, 20, <BrushIco />],
              [237.5, 12, <Chev light />],
            ],
            [[93, 22, <Undo2 size={20} strokeWidth={1} color="#808488" />], [124.500, 22, <Redo2 size={20} strokeWidth={1} color="#b5b8bb" />]],
          ]}
        />
        <RibbonGroup
          w={311}
          label="Шрифт"
          from={258}
          rows={[
            [
              [347.5, 161, <ComboBox><ComboText>Calibri</ComboText><ComboArrow $line><ChevronDown size={12} strokeWidth={2.500} /></ComboArrow></ComboBox>],
              [460.25, 49, <ComboBox><ComboText $pl={11}>11</ComboText><ComboArrow $line><ChevronDown size={12} strokeWidth={2.500} /></ComboArrow></ComboBox>],
              [505, 22, <Glyph $s={18}>A<Sup>−</Sup></Glyph>],
              [537.5, 22, <Glyph $s={18}>A<Sup>+</Sup></Glyph>],
            ],
            [
              [278, 20, <Glyph $s={18} $fw={800} $c="#707478">Ж</Glyph>],
              [311, 20, <Glyph $s={18} $it>К</Glyph>],
              [344, 20, <Glyph $s={18} $deco="underline">Ч</Glyph>],
              [375.5, 24, <Glyph $s={15}>АВ</Glyph>],
              [407, 20, <Glyph $s={17} $deco="line-through">Т</Glyph>],
              [440, 16, <Dots />],
              [459, 1, <VRule />],
              [480, 20, <ColorTool><Glyph $s={14}>A</Glyph><ColorBar $c="#000" /></ColorTool>],
              [500, 12, <Chev light />],
              [528, 20, <PencilIco />],
              [548, 12, <Chev light />],
            ],
          ]}
        />
        <RibbonGroup
          w={246}
          label="Выравнивание"
          from={569}
          rows={[
            [
              [589, 16, <AlignIco kind="left" />],
              [621, 16, <AlignIco kind="center" />],
              [653.5, 22, <Toggled><AlignIco kind="right" /></Toggled>],
              [685, 16, <AlignIco kind="justify" />],
              [705, 1, <VRule />],
              [725, 18, <VAlignIco kind="top" />],
              [757, 18, <VAlignIco kind="mid" />],
              [790, 22, <Toggled><VAlignIco kind="bottom" c="#6f8e8a" /></Toggled>],
            ],
            [
              [588.5, 18, <LetterArrow />],
              [613, 12, <Chev light />],
              [637, 20, <WrapIco />],
            ],
          ]}
        />
        <RibbonGroup
          w={149}
          label="Число"
          from={815}
          rows={[
            [[883.5, 121, <ComboBox $white><ComboText $pl={7}>Общий</ComboText><ComboArrow><ChevronDown size={13} strokeWidth={2} color="#b4b7ba" /></ComboArrow></ComboBox>]],
            [
              [834.5, 20, <Glyph $s={19}>₽</Glyph>],
              [867, 20, <Glyph $s={18}>%</Glyph>],
              [887, 1, <VRule />],
              [908, 18, <DecIco dir="left" />],
              [940, 18, <DecIco dir="right" />],
            ],
          ]}
        />
        <RibbonGroup
          w={181}
          plain
          label="Ячейки"
          from={964}
          rows={[
            [
              [985.5, 20, <FillIco />],
              [1005, 12, <Chev light />],
              [1032, 18, <BorderIco />],
              [1053, 12, <Chev light />],
              [1069, 1, <VRule $h={46} />],
              [1090, 20, <TableIco side="top" />],
              [1122.500, 20, <TableIco side="bottom" />],
            ],
            [
              [984.5, 18, <RowsIco />],
              [1069, 1, <VRule $h={0} />],
              [1089.5, 18, <TableIco side="left" />],
              [1121.6, 18, <TableIco side="right" />],
            ],
          ]}
        />
        <WinBlock $w={410}>
          <Tools
            from={1145}
            h={70}
            items={[
              [1166, 26, <PivotBig />],
              [1210, 26, <ImageBig />],
              [1250, 30, <Link size={28} strokeWidth={0.800} color="#9a9ea2" />],
              [1294, 16, <Dots />],
            ]}
          />
          <CollapseRow $pr={6}>
            <ChevronUp size={14} strokeWidth={3} />
          </CollapseRow>
        </WinBlock>
        <WinBlock $w={365}>
          <Tools
            from={1555}
            h={70}
            items={[
              [1565, 20, <PivotBig cut />],
              [1604, 24, <ImageBig small />],
              [1644, 30, <Link size={27} strokeWidth={0.800} color="#9a9ea2" />],
              [1680.5, 16, <Dots />],
            ]}
          />
          <CollapseRow $pr={5}>
            <ChevronUp size={14} strokeWidth={3} />
          </CollapseRow>
        </WinBlock>
      </Ribbon>

      <Work>
        <SheetArea>
          <FormulaBar>
            <FxMark>fx</FxMark>
            <FormulaValue>3825,44</FormulaValue>
            <PanelHandle />
          </FormulaBar>
          <GridRow>
            <SheetGrid>
              <ColHead />
              {colNames.map((c) => (
                <ColHead key={c} $active={c === "E"}>{c}</ColHead>
              ))}
              {rows.map((r) => (
                <React.Fragment key={r.n}>
                  <RowHead>{r.hideNum ? "" : r.n}</RowHead>
                  {[0, 1, 2, 3, 4, 5].map((i) => {
                    const selected = r.sel === i;
                    const skin = selected ? "selected" : r.skin || "plain";
                    const filter = r.filters && r.filters[i];
                    return (
                      <Cell key={i} $skin={skin} $num={isNumCol(r.n, i)} $bold={r.boldA && i === 0}>
                        {r.c[i]}
                        {filter && <FilterBtn />}
                        {selected && <SelHandle />}
                      </Cell>
                    );
                  })}
                  {[6, 7, 8, 9].map((i) => (
                    <Cell key={i} $skin="empty" />
                  ))}
                </React.Fragment>
              ))}
            </SheetGrid>
            <VScroll>
              <ScrollBtn $h={21}><ChevronUp size={16} strokeWidth={2.500} /></ScrollBtn>
              <ScrollThumb $h={460} />
              <ScrollRest />
              <ScrollBtn $h={21}><ChevronDown size={16} strokeWidth={2.500} /></ScrollBtn>
            </VScroll>
          </GridRow>
          <HScroll>
            <HBtn><ChevronLeft size={15} strokeWidth={2.500} /></HBtn>
            <HThumb />
          </HScroll>
          <SheetTabs>
            <SheetNav><ChevronLeft size={15} /></SheetNav>
            <SheetNav><ChevronRight size={15} /></SheetNav>
            <SheetTab $w={128}>Сводная таблица 1</SheetTab>
            <SheetTab $w={58} $active>Лист3</SheetTab>
            <SheetTab $w={58}>Лист1</SheetTab>
            <SheetTab $w={58}>Лист2</SheetTab>
            <AddSheet><Plus size={18} strokeWidth={1.800} /></AddSheet>
          </SheetTabs>
        </SheetArea>

        <Panel $w={348}>
          <PanelHead $pl={23}>
            <BackArrow $pl={3}><ArrowRight size={18} strokeWidth={2} /></BackArrow>
            <TabRow $gap={11}>
              <TabBtn $s={14.300} $active>Конструктор</TabBtn>
              <TabBtn $s={14.300}>Параметры</TabBtn>
            </TabRow>
          </PanelHead>
          <RedFrame $l={13} $t={18} $w={113} $h={70} />
          <PivotBody>
            <PivotCol>
              <FieldLabel $s={12.300}>Доступные поля:</FieldLabel>
              <FieldBox $h={271}>
                {available.map(([name, used]) => (
                  <FieldItem key={name} $used={used}>{name}</FieldItem>
                ))}
              </FieldBox>
              <FieldLabel $s={12.300} $mt={17}>Строки:</FieldLabel>
              <FieldBox $h={407}>
                <FieldItem>Продавец</FieldItem>
                <FieldItem>Годы</FieldItem>
              </FieldBox>
            </PivotCol>
            <PivotCol>
              <FieldLabel $s={12.300}>Фильтры:</FieldLabel>
              <FieldBox $h={116}>
                <FieldItem>Канал продажи</FieldItem>
              </FieldBox>
              <FieldLabel $s={12.300} $mt={17}>Столбцы:</FieldLabel>
              <FieldBox $h={116}>
                <FieldItem>Регион</FieldItem>
              </FieldBox>
              <FieldLabel $s={12.300} $mt={17}>Значения:</FieldLabel>
              <FieldBox $h={407}>
                <ValueCard>
                  <ValueTitle>Сумма по полю С...</ValueTitle>
                  <ValueBtn>Сумма <ChevronDown size={12} strokeWidth={3} /></ValueBtn>
                  <ValueBtn>Без дополн...</ValueBtn>
                </ValueCard>
              </FieldBox>
            </PivotCol>
          </PivotBody>
        </Panel>
        <Strip $w={44} $pr={2}>
          <Search size={21} strokeWidth={1.200} />
          <StripFx>fx</StripFx>
          <StripActive $w={35}><PivotSmall /></StripActive>
        </Strip>
        <Sliver>
          <SliverPart $h={28} $c="#fff" />
          <SliverPart $h={22} $c="#eeefef" />
          <SliverPart $h={460} $c="#c9c9c9" />
        </Sliver>

        <Panel $w={321} $edge>
          <PanelHead $pl={20}>
            <BackArrow $pl={4}><ArrowRight size={17} strokeWidth={2} /></BackArrow>
            <TabRow $gap={9}>
              <TabBtn $s={13.100}>Конструктор</TabBtn>
              <TabBtn $s={13.100} $active $line>Параметры</TabBtn>
            </TabRow>
          </PanelHead>
          <RedFrame $l={108} $t={31} $w={115} $h={69} />
          <PanelMain>
            <ParamsBody>
              <FieldLabel>Источник данных:</FieldLabel>
              <TextInput $white $c="#1e2022" $h={31} $s={13.500} $mt={4}>'Лист1'!А1:Е800</TextInput>
              <InfoBox>
                <Ico w={14} h={14} c="#555">
                  <circle cx="7" cy="7" r="6" />
                  <path d="M7 3.500v4.500M7 9.500v1.200" />
                </Ico>
                <span>Параметры сводной таблицы скоро<br />станут доступны для редактирования</span>
              </InfoBox>
              <FieldLabel $mt={16}>Показывать итоги:</FieldLabel>
              <CheckRow $mt={8}>
                <CheckBox><Ico w={10} h={10} c="#a2a6aa" sw={1.500}><path d="M1 5l3 3 5-6" /></Ico></CheckBox>
                Для столбцов
              </CheckRow>
              <CheckRow>
                <CheckBox><Ico w={10} h={10} c="#a2a6aa" sw={1.500}><path d="M1 5l3 3 5-6" /></Ico></CheckBox>
                Для строк
              </CheckRow>
              <FieldLabel $mt={16}>Макет сводной таблицы:</FieldLabel>
              <TextInput $h={31} $mt={4}>
                <ComboText $pl={0}>Структурированный</ComboText>
                <ComboArrow><ChevronDown size={12} strokeWidth={2.500} /></ComboArrow>
              </TextInput>
              <FieldLabel $mt={24}>Подписи:</FieldLabel>
              <LabelGrid>
                {captions.map(([cap, hint]) => (
                  <React.Fragment key={cap}>
                    <RowCaption>{cap}</RowCaption>
                    <TextInput $h={32}>{hint}</TextInput>
                  </React.Fragment>
                ))}
              </LabelGrid>
              <FieldLabel $mt={23}>Расположение фильтров:</FieldLabel>
              <CheckRow $mt={7}>
                <RadioDot $on />
                Вниз, затем вправо
              </CheckRow>
              <CheckRow>
                <RadioDot />
                Вправо, затем вниз
              </CheckRow>
              <FieldLabel $mt={18}>Полей в столбце фильтра:</FieldLabel>
            </ParamsBody>
            <ParamScroll>
              <ScrollBtn $h={21}><ChevronUp size={15} strokeWidth={2.500} color="#444" /></ScrollBtn>
              <ScrollThumb $h={656} />
              <ScrollRest />
              <ScrollBtn $h={20}><ChevronDown size={15} strokeWidth={2.500} color="#444" /></ScrollBtn>
            </ParamScroll>
          </PanelMain>
        </Panel>
        <Strip $w={39} $pr={3}>
          <Search size={21} strokeWidth={1.200} />
          <StripFx>fx</StripFx>
          <StripActive $w={32}><PivotSmall /></StripActive>
        </Strip>
      </Work>

      <StatusBar>
        <Tools
          h={25}
          from={0}
          items={[
            [1218, 34, <Stat>СУММ</Stat>],
            [1262.5, 40, <StatValue>3825,44</StatValue>],
            [1314.5, 42, <Stat>СРЗНАЧ</Stat>],
            [1362.5, 40, <StatValue>3825,44</StatValue>],
            [1407, 26, <Stat>МИН</Stat>],
            [1447.5, 40, <StatValue>3825,44</StatValue>],
            [1493.5, 30, <Stat>МАКС</Stat>],
            [1537, 40, <StatValue>3825,44</StatValue>],
            [1583.5, 32, <Stat>СЧЁТЗ</Stat>],
            [1608.5, 8, <StatValue>1</StatValue>],
            [1635, 20, <FxBox>f</FxBox>],
            [1650, 1, <VRule $h={18} />],
            [1660, 12, <Minus size={12} strokeWidth={2} color="#85888b" />],
            [1725, 96, <ZoomTrack><ZoomThumb /></ZoomTrack>],
            [1790, 12, <Plus size={13} strokeWidth={2} color="#85888b" />],
            [1838.5, 30, <Stat>100%</Stat>],
            [1879, 12, <ChevronDown size={12} strokeWidth={3} color="#555" />],
          ]}
        />
      </StatusBar>

      <TaskBar>
        <TaskLeft>
          <Tools
            h={50}
            from={0}
            items={[
              [30, 40, <WinLogo />],
              [90, 40, <TaskView />],
              [154.5, 51, <TaskItem $running><CortanaBlob /></TaskItem>],
              [216.5, 51, <TaskItem $running><EdgeLogo /></TaskItem>],
              [278.5, 51, <TaskItem $running><FolderLogo /></TaskItem>],
              [339, 40, <CalcLogo />],
              [400, 40, <SnipLogo />],
              [463, 40, <ExcelLogo />],
              [526.5, 51, <TaskItem $running><OutlookLogo /></TaskItem>],
              [587, 40, <VideoLogo />],
              [649, 40, <ScreenLogo />],
              [710, 56, <TaskItem $running $active><MyOfficeLogo /></TaskItem>],
            ]}
          />
        </TaskLeft>
        <Tools
          h={50}
          from={1600}
          items={[
            [1618, 16, <Ico w={14} h={8} c="#fff"><path d="M1 7.500 7 1l6 6.500" /></Ico>],
            [1648, 20, <Ico w={20} h={14} c="#fff"><rect x="4" y="3" width="14" height="10" fill="#fff" /><path d="M19 5.500v5M2 0v4M0 4h4" /></Ico>],
            [1679, 18, <Ico w={16} h={16} c="#fff"><path d="M1 15A14 14 0 0 1 15 1M4 15A11 11 0 0 1 15 4M7 15a8 8 0 0 1 8-8" /><circle cx="13.500" cy="13.500" r="1.200" fill="#fff" /></Ico>],
            [1706, 20, <Ico w={20} h={18} c="#fff"><path d="M1 6h3l4-4v14l-4-4H1zM11 6c1.500 2 1.500 4 0 6M14 4c2.500 3 2.500 7 0 10M17 2c3 4 3 10 0 14" /></Ico>],
            [1745, 30, <TrayText>РУС</TrayText>],
            [1811, 76, <TaskClock>14:46<br />23.03.2022</TaskClock>],
            [1879, 22, <Ico w={20} h={20} c="#fff"><path d="M.500 1h19v15h-7l-2.500 3-2.500-3H.500z" /></Ico>],
            [1920, 0, null],
          ]}
        />
      </TaskBar>
    </Page>
  );
}
